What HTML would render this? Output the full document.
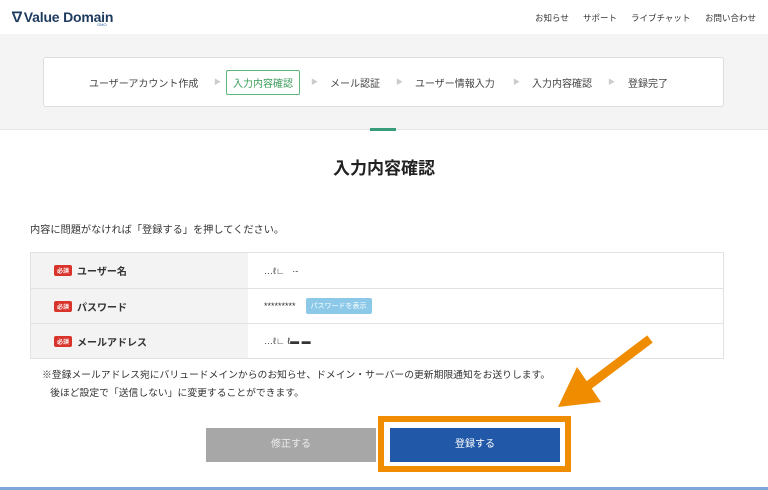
<!DOCTYPE html>
<html><head><meta charset="utf-8"><style>
*{margin:0;padding:0;box-sizing:border-box}
body{width:768px;height:490px;overflow:hidden;background:#fff;font-family:"Liberation Sans","Noto Sans CJK JP",sans-serif;color:#333;position:relative}
.abs{position:absolute}
.hdr{left:0;top:0;width:768px;height:34px;background:#fff;box-shadow:0 1px 2px rgba(0,0,0,.06)}
.band{left:0;top:34px;width:768px;height:96px;background:#f4f4f4;border-bottom:1px solid #e6e6e6}
.steps{left:43px;top:57px;width:681px;height:50px;background:#fff;border:1px solid #ddd;border-radius:3px;font-size:10px;color:#444}
.steps span{position:absolute;top:17px;white-space:nowrap}
.ar{color:#ccc;font-size:7px;top:19px!important}
.tbl{left:30px;top:252px;width:694px;border:1px solid #e2e2e2}
.row{height:35px;display:flex;border-top:1px solid #e2e2e2}
.row:first-child{border-top:none}
.lab{width:217px;background:#f3f3f3;font-size:10px;font-weight:bold;display:flex;align-items:center;padding-left:23px;color:#333}
.req{background:#d9342b;color:#fff;font-size:6px;padding:1px 3px;border-radius:2px;margin-right:5px}
.val{flex:1;display:flex;align-items:center;padding-left:16px;font-size:9px}
.nav{top:12px;font-size:8.5px;color:#333;white-space:nowrap}
</style></head><body>
<div class="abs hdr"></div>
<div class="abs" style="left:10px;top:7px;font-size:14px;font-weight:bold;color:#1d3a5f;letter-spacing:-.2px">∇Value Domain</div>
<div class="abs" style="left:97px;top:22px;font-size:4px;color:#2a5ea8">GMO</div>
<div class="abs nav" style="left:535px">お知らせ</div>
<div class="abs nav" style="left:583px">サポート</div>
<div class="abs nav" style="left:631px">ライブチャット</div>
<div class="abs nav" style="left:705px">お問い合わせ</div>
<div class="abs band"></div>
<div class="abs steps">
<span style="left:45px">ユーザーアカウント作成</span>
<span class="ar" style="left:170px">▶</span>
<span style="left:182px;top:12px;border:1px solid #5cb77a;color:#3a9d5a;padding:4px 6px;border-radius:2px;background:#fff">入力内容確認</span>
<span class="ar" style="left:267px">▶</span>
<span style="left:286px">メール認証</span>
<span class="ar" style="left:352px">▶</span>
<span style="left:371px">ユーザー情報入力</span>
<span class="ar" style="left:469px">▶</span>
<span style="left:488px">入力内容確認</span>
<span class="ar" style="left:564px">▶</span>
<span style="left:584px">登録完了</span>
</div>
<div class="abs" style="left:370px;top:128px;width:26px;height:3px;background:#3a9d7a"></div>
<div class="abs" style="left:0;top:154px;width:768px;text-align:center;font-size:17px;font-weight:bold;color:#222">入力内容確認</div>
<div class="abs" style="left:30px;top:221px;font-size:10.2px">内容に問題がなければ「登録する」を押してください。</div>
<div class="abs tbl">
<div class="row"><div class="lab"><span class="req">必須</span>ユーザー名</div><div class="val">…ℓ∟ &nbsp; ·-</div></div>
<div class="row"><div class="lab"><span class="req">必須</span>パスワード</div><div class="val">********* <span style="margin-left:10px;background:#8cc9e8;color:#fff;font-size:7px;padding:3px 5px;border-radius:2px">パスワードを表示</span></div></div>
<div class="row"><div class="lab"><span class="req">必須</span>メールアドレス</div><div class="val">…ℓ∟ ℓ▬ ▬</div></div>
</div>
<div class="abs" style="left:42px;top:367px;font-size:9.8px;line-height:18px;white-space:nowrap">※登録メールアドレス宛にバリュードメインからのお知らせ、ドメイン・サーバーの更新期限通知をお送りします。<br>&nbsp;&nbsp;&nbsp;後ほど設定で「送信しない」に変更することができます。</div>
<div class="abs" style="left:206px;top:428px;width:170px;height:34px;background:#a7a7a7;color:#eee;font-size:10px;text-align:center;line-height:34px">修正する</div>
<div class="abs" style="left:378px;top:416px;width:193px;height:56px;border:6px solid #f08c00"></div>
<div class="abs" style="left:390px;top:428px;width:170px;height:34px;background:#2159a8;color:#fff;font-size:10px;text-align:center;line-height:34px">登録する</div>
<svg class="abs" style="left:0;top:0" width="768" height="490"><line x1="650" y1="339" x2="585" y2="388" stroke="#f08c00" stroke-width="9"/><polygon points="558,407 577,367 601,402" fill="#f08c00"/></svg>
<div class="abs" style="left:0;top:487px;width:768px;height:3px;background:#7ea6d8"></div>
</body></html>
